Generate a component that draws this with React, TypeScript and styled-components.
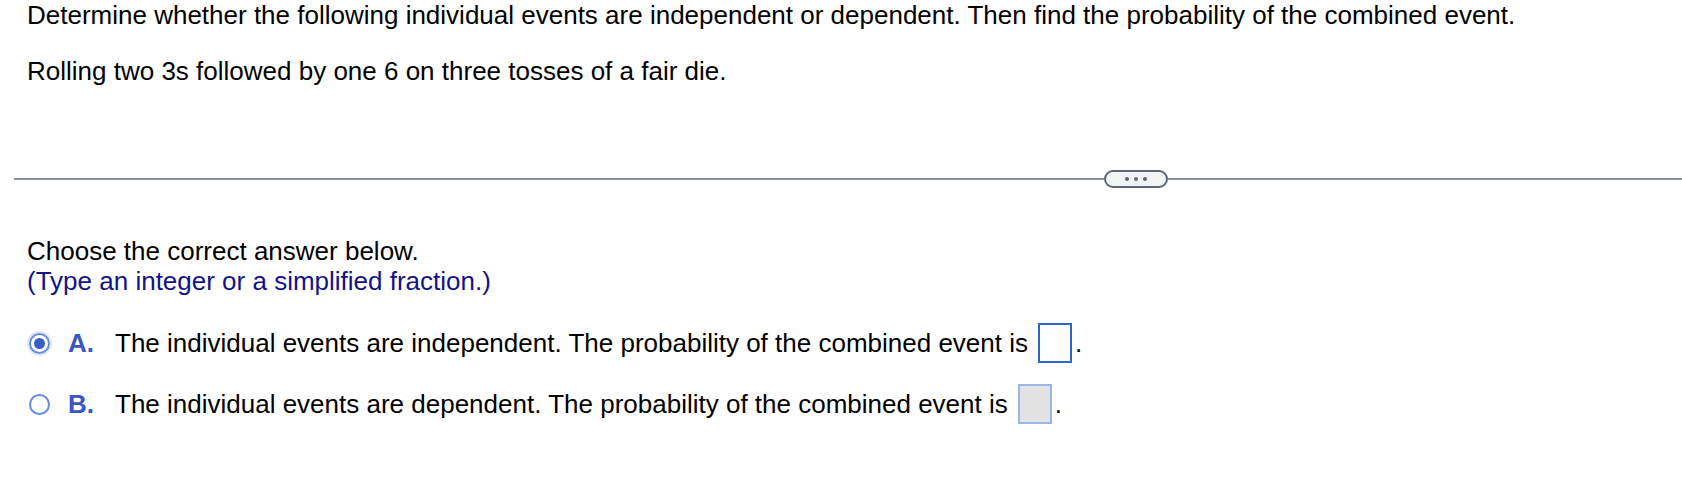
import styled, { createGlobalStyle } from "styled-components";

const GlobalStyle = createGlobalStyle`
  html, body {
    margin: 0;
    padding: 0;
    background: #ffffff;
  }
  body {
    font-family: "Liberation Sans", Arial, sans-serif;
    color: #000000;
  }
`;

const Page = styled.div`
  width: 1682px;
  height: 498px;
  overflow: hidden;
  background: #ffffff;
`;

const Question = styled.div`
  padding: 0 0 0 27px;
  font-size: 26px;
  line-height: 30px;
`;

const Paragraph = styled.p<{ $top: number }>`
  margin: ${({ $top }) => $top}px 0 0 0;
`;

const DividerRow = styled.div`
  margin: 84px 0 0 14px;
  display: flex;
  align-items: center;
  height: 18px;
`;

const Rule = styled.div<{ $grow?: boolean }>`
  height: 2px;
  background: #8a929f;
  flex: ${({ $grow }) => ($grow ? "1" : "0 0 1090px")};
`;

const MoreButton = styled.button`
  width: 64px;
  height: 18px;
  box-sizing: border-box;
  border: 2px solid #5d6673;
  border-radius: 9px;
  background: #f3f4f6;
  display: flex;
  align-items: center;
  justify-content: center;
  gap: 5px;
  padding: 0;
`;

const Dot = styled.span`
  width: 4px;
  height: 4px;
  border-radius: 50%;
  background: #5d6673;
`;

const Answer = styled.div`
  padding: 0 0 0 27px;
  margin-top: 48px;
  font-size: 26px;
`;

const Prompt = styled.div`
  line-height: 30px;
`;

const Hint = styled.div`
  color: #12138a;
  line-height: 30px;
`;

const Options = styled.div`
  margin-top: 27px;
  display: flex;
  flex-direction: column;
  gap: 21px;
`;

const Option = styled.label`
  display: flex;
  align-items: center;
  height: 40px;
`;

const Radio = styled.span<{ $checked?: boolean }>`
  margin-left: 2px;
  width: 21px;
  height: 21px;
  box-sizing: border-box;
  border-radius: 50%;
  border: 2px solid #6a8ce0;
  display: flex;
  align-items: center;
  justify-content: center;
  box-shadow: ${({ $checked }) =>
    $checked ? "0 0 0 2px rgba(106, 140, 224, 0.2)" : "none"};

  &::after {
    content: "";
    width: 11px;
    height: 11px;
    border-radius: 50%;
    background: ${({ $checked }) => ($checked ? "#3a5cc8" : "transparent")};
  }
`;

const Letter = styled.span`
  margin-left: 18px;
  width: 47px;
  color: #3a56c4;
  font-weight: bold;
`;

const Statement = styled.span`
  display: flex;
  align-items: center;
  white-space: nowrap;
`;

const Blank = styled.span<{ $disabled?: boolean }>`
  display: inline-block;
  margin-left: 10px;
  width: 34px;
  height: 40px;
  box-sizing: border-box;
  border: 2px solid ${({ $disabled }) => ($disabled ? "#9db4e8" : "#2e66c8")};
  background: ${({ $disabled }) => ($disabled ? "#e2e2e2" : "#ffffff")};
`;

const Period = styled.span`
  margin-left: 3px;
`;

export default function App() {
  return (
    <Page>
      <GlobalStyle />
      <Question>
        <Paragraph $top={0}>
          Determine whether the following individual events are independent
          or dependent. Then find the probability of the combined event.
        </Paragraph>
        <Paragraph $top={26}>
          Rolling two 3s followed by one 6 on three tosses of a fair die.
        </Paragraph>
      </Question>
      <DividerRow>
        <Rule />
        <MoreButton aria-label="more">
          <Dot />
          <Dot />
          <Dot />
        </MoreButton>
        <Rule $grow />
      </DividerRow>
      <Answer>
        <Prompt>Choose the correct answer below.</Prompt>
        <Hint>(Type an integer or a simplified fraction.)</Hint>
        <Options>
          <Option>
            <Radio $checked />
            <Letter>A.</Letter>
            <Statement>
              The individual events are independent. The probability of the
              combined event is
              <Blank />
              <Period>.</Period>
            </Statement>
          </Option>
          <Option>
            <Radio />
            <Letter>B.</Letter>
            <Statement>
              The individual events are dependent. The probability of the
              combined event is
              <Blank $disabled />
              <Period>.</Period>
            </Statement>
          </Option>
        </Options>
      </Answer>
    </Page>
  );
}
